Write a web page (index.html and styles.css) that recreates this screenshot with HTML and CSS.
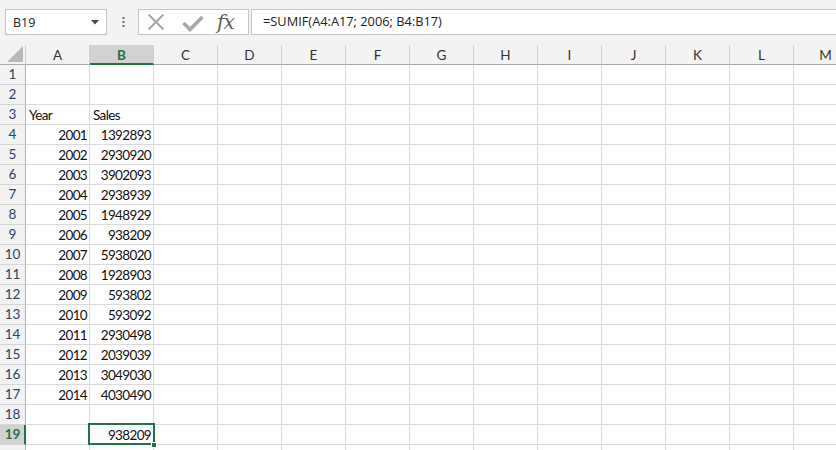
FILE: index.html
```html
<!DOCTYPE html>
<html>
<head>
<meta charset="utf-8">
<link rel="stylesheet" href="styles.css">
</head>
<body>
<div class="toolbar">
  <div class="namebox">
    <span class="nb-text">B19</span>
    <svg class="nb-arrow" width="8" height="5" viewBox="0 0 8 5"><polygon points="0,0 8,0 4,4.5" fill="#4a4a4a"/></svg>
  </div>
  <div class="dots">
    <svg width="3" height="12" viewBox="0 0 3 12"><rect x="0.5" y="0" width="2" height="2" fill="#6a6a6a"/><rect x="0.5" y="4" width="2" height="2" fill="#6a6a6a"/><rect x="0.5" y="8" width="2" height="2" fill="#6a6a6a"/></svg>
  </div>
  <div class="fxgroup">
    <svg class="ico-x" width="18" height="18" viewBox="0 0 18 18"><path d="M1.5 1.5 L16.5 16.5 M16.5 1.5 L1.5 16.5" stroke="#a8a8a8" stroke-width="2" fill="none"/></svg>
    <svg class="ico-check" width="22" height="16" viewBox="0 0 22 16"><path d="M1.5 7 L8 13.5 L20.5 1" stroke="#a8a8a8" stroke-width="3.6" fill="none"/></svg>
    <span class="ico-fx">fx</span>
  </div>
  <div class="formula">=SUMIF(A4:A17; 2006; B4:B17)</div>
</div>

<div class="sheet">
  <div class="row head">
    <div class="corner"><svg width="16" height="16" viewBox="0 0 16 16"><polygon points="16,0 16,16 0,16" fill="#b9b9b9"/></svg></div>
    <div class="ch">A</div><div class="ch sel">B</div><div class="ch">C</div><div class="ch">D</div><div class="ch">E</div><div class="ch">F</div><div class="ch">G</div><div class="ch">H</div><div class="ch">I</div><div class="ch">J</div><div class="ch">K</div><div class="ch">L</div><div class="ch">M</div>
  </div>
  <div class="row"><div class="rh">1</div><div class="c"></div><div class="c"></div><div class="c"></div><div class="c"></div><div class="c"></div><div class="c"></div><div class="c"></div><div class="c"></div><div class="c"></div><div class="c"></div><div class="c"></div><div class="c"></div><div class="c"></div></div>
  <div class="row"><div class="rh">2</div><div class="c"></div><div class="c"></div><div class="c"></div><div class="c"></div><div class="c"></div><div class="c"></div><div class="c"></div><div class="c"></div><div class="c"></div><div class="c"></div><div class="c"></div><div class="c"></div><div class="c"></div></div>
  <div class="row"><div class="rh">3</div><div class="c">Year</div><div class="c">Sales</div><div class="c"></div><div class="c"></div><div class="c"></div><div class="c"></div><div class="c"></div><div class="c"></div><div class="c"></div><div class="c"></div><div class="c"></div><div class="c"></div><div class="c"></div></div>
  <div class="row"><div class="rh">4</div><div class="c n">2001</div><div class="c n">1392893</div><div class="c"></div><div class="c"></div><div class="c"></div><div class="c"></div><div class="c"></div><div class="c"></div><div class="c"></div><div class="c"></div><div class="c"></div><div class="c"></div><div class="c"></div></div>
  <div class="row"><div class="rh">5</div><div class="c n">2002</div><div class="c n">2930920</div><div class="c"></div><div class="c"></div><div class="c"></div><div class="c"></div><div class="c"></div><div class="c"></div><div class="c"></div><div class="c"></div><div class="c"></div><div class="c"></div><div class="c"></div></div>
  <div class="row"><div class="rh">6</div><div class="c n">2003</div><div class="c n">3902093</div><div class="c"></div><div class="c"></div><div class="c"></div><div class="c"></div><div class="c"></div><div class="c"></div><div class="c"></div><div class="c"></div><div class="c"></div><div class="c"></div><div class="c"></div></div>
  <div class="row"><div class="rh">7</div><div class="c n">2004</div><div class="c n">2938939</div><div class="c"></div><div class="c"></div><div class="c"></div><div class="c"></div><div class="c"></div><div class="c"></div><div class="c"></div><div class="c"></div><div class="c"></div><div class="c"></div><div class="c"></div></div>
  <div class="row"><div class="rh">8</div><div class="c n">2005</div><div class="c n">1948929</div><div class="c"></div><div class="c"></div><div class="c"></div><div class="c"></div><div class="c"></div><div class="c"></div><div class="c"></div><div class="c"></div><div class="c"></div><div class="c"></div><div class="c"></div></div>
  <div class="row"><div class="rh">9</div><div class="c n">2006</div><div class="c n">938209</div><div class="c"></div><div class="c"></div><div class="c"></div><div class="c"></div><div class="c"></div><div class="c"></div><div class="c"></div><div class="c"></div><div class="c"></div><div class="c"></div><div class="c"></div></div>
  <div class="row"><div class="rh">10</div><div class="c n">2007</div><div class="c n">5938020</div><div class="c"></div><div class="c"></div><div class="c"></div><div class="c"></div><div class="c"></div><div class="c"></div><div class="c"></div><div class="c"></div><div class="c"></div><div class="c"></div><div class="c"></div></div>
  <div class="row"><div class="rh">11</div><div class="c n">2008</div><div class="c n">1928903</div><div class="c"></div><div class="c"></div><div class="c"></div><div class="c"></div><div class="c"></div><div class="c"></div><div class="c"></div><div class="c"></div><div class="c"></div><div class="c"></div><div class="c"></div></div>
  <div class="row"><div class="rh">12</div><div class="c n">2009</div><div class="c n">593802</div><div class="c"></div><div class="c"></div><div class="c"></div><div class="c"></div><div class="c"></div><div class="c"></div><div class="c"></div><div class="c"></div><div class="c"></div><div class="c"></div><div class="c"></div></div>
  <div class="row"><div class="rh">13</div><div class="c n">2010</div><div class="c n">593092</div><div class="c"></div><div class="c"></div><div class="c"></div><div class="c"></div><div class="c"></div><div class="c"></div><div class="c"></div><div class="c"></div><div class="c"></div><div class="c"></div><div class="c"></div></div>
  <div class="row"><div class="rh">14</div><div class="c n">2011</div><div class="c n">2930498</div><div class="c"></div><div class="c"></div><div class="c"></div><div class="c"></div><div class="c"></div><div class="c"></div><div class="c"></div><div class="c"></div><div class="c"></div><div class="c"></div><div class="c"></div></div>
  <div class="row"><div class="rh">15</div><div class="c n">2012</div><div class="c n">2039039</div><div class="c"></div><div class="c"></div><div class="c"></div><div class="c"></div><div class="c"></div><div class="c"></div><div class="c"></div><div class="c"></div><div class="c"></div><div class="c"></div><div class="c"></div></div>
  <div class="row"><div class="rh">16</div><div class="c n">2013</div><div class="c n">3049030</div><div class="c"></div><div class="c"></div><div class="c"></div><div class="c"></div><div class="c"></div><div class="c"></div><div class="c"></div><div class="c"></div><div class="c"></div><div class="c"></div><div class="c"></div></div>
  <div class="row"><div class="rh">17</div><div class="c n">2014</div><div class="c n">4030490</div><div class="c"></div><div class="c"></div><div class="c"></div><div class="c"></div><div class="c"></div><div class="c"></div><div class="c"></div><div class="c"></div><div class="c"></div><div class="c"></div><div class="c"></div></div>
  <div class="row"><div class="rh">18</div><div class="c"></div><div class="c"></div><div class="c"></div><div class="c"></div><div class="c"></div><div class="c"></div><div class="c"></div><div class="c"></div><div class="c"></div><div class="c"></div><div class="c"></div><div class="c"></div><div class="c"></div></div>
  <div class="row"><div class="rh sel">19</div><div class="c"></div><div class="c n active">938209<span class="selbox"></span><span class="handle"></span></div><div class="c"></div><div class="c"></div><div class="c"></div><div class="c"></div><div class="c"></div><div class="c"></div><div class="c"></div><div class="c"></div><div class="c"></div><div class="c"></div><div class="c"></div></div>
  <div class="row"><div class="rh"></div><div class="c"></div><div class="c"></div><div class="c"></div><div class="c"></div><div class="c"></div><div class="c"></div><div class="c"></div><div class="c"></div><div class="c"></div><div class="c"></div><div class="c"></div><div class="c"></div><div class="c"></div></div>
</div>
</body>
</html>
```

FILE: styles.css
```css
* { box-sizing: border-box; }
html, body {
  margin: 0;
  padding: 0;
  width: 836px;
  height: 450px;
  overflow: hidden;
  background: #ffffff;
}
body {
  font-family: "Lato", "Liberation Sans", sans-serif;
}

/* ---------- toolbar ---------- */
.toolbar {
  height: 45px;
  background: #f3f3f3;
  display: flex;
  align-items: flex-start;
  padding: 9px 0 0 5px;
  white-space: nowrap;
}
.namebox {
  width: 102px;
  height: 26px;
  background: #fff;
  border: 1px solid #c6c6c6;
  display: flex;
  align-items: center;
  justify-content: space-between;
  padding: 0 7px 0 7px;
  font-family: "Open Sans", "Liberation Sans", sans-serif;
  font-size: 12.5px;
  color: #222;
}
.nb-arrow { margin-top: 1px; }
.dots {
  width: 31px;
  height: 26px;
  display: flex;
  align-items: flex-start;
  padding: 8px 0 0 15px;
}
.fxgroup {
  width: 111px;
  height: 26px;
  background: #fff;
  border: 1px solid #c6c6c6;
  display: flex;
  align-items: center;
  padding-left: 8px;
}
.ico-x { margin-top: -1px; }
.ico-check { margin-left: 17px; margin-top: 4px; }
.ico-fx {
  margin-left: 13px;
  font-family: "DejaVu Serif", "Liberation Serif", serif;
  font-style: italic;
  font-size: 20px;
  letter-spacing: -1px;
  color: #5f5f5f;
  line-height: 24px;
  margin-top: -1px;
}
.formula {
  margin-left: 2px;
  flex: 1;
  height: 26px;
  background: #fff;
  border: 1px solid #c6c6c6;
  border-right: none;
  padding-left: 11px;
  font-family: "Open Sans", "Liberation Sans", sans-serif;
  font-size: 12.8px;
  line-height: 23px;
  color: #222;
}

/* ---------- sheet ---------- */
.sheet {
  font-size: 13.5px;
  letter-spacing: -0.65px;
  color: #111;
}
.row {
  display: flex;
  height: 20px;
}
.rh {
  flex: 0 0 26px;
  height: 20px;
  background: #f3f3f3;
  border-right: 1px solid #b4b4b4;
  border-bottom: 1px solid #d6d6d6;
  text-align: center;
  line-height: 19px;
  color: #2b4468;
  letter-spacing: 0;
}
.rh.sel {
  background: #d2d2d2;
  border-right: 2px solid #217346;
  color: #217346;
  font-weight: bold;
  padding-left: 1px;
}
.c {
  flex: 0 0 64px;
  height: 20px;
  border-right: 1px solid #dadada;
  border-bottom: 1px solid #dadada;
  padding: 0 2px 0 3px;
  line-height: 20px;
  overflow: visible;
  white-space: nowrap;
}
.c.n { text-align: right; }

.head .corner {
  flex: 0 0 26px;
  height: 20px;
  background: #f3f3f3;
  border-right: 1px solid #d0d0d0;
  border-bottom: 1px solid #ababab;
  display: flex;
  align-items: flex-end;
  justify-content: flex-end;
  padding: 0 2px 2px 0;
}
.ch {
  flex: 0 0 64px;
  height: 20px;
  background: #f3f3f3;
  border-right: 1px solid #d0d0d0;
  border-bottom: 1px solid #ababab;
  text-align: center;
  line-height: 20px;
  color: #333;
  letter-spacing: 0;
}
.ch.sel {
  background: #d2d2d2;
  border-bottom: 2px solid #217346;
  color: #217346;
  font-weight: bold;
}

.active { position: relative; }
.selbox {
  position: absolute;
  left: -2px;
  top: -2px;
  width: 67px;
  height: 22px;
  border: 2px solid #217346;
}
.handle {
  position: absolute;
  right: -4px;
  bottom: -4px;
  width: 6px;
  height: 6px;
  background: #217346;
  border: 1px solid #fff;
}
```
